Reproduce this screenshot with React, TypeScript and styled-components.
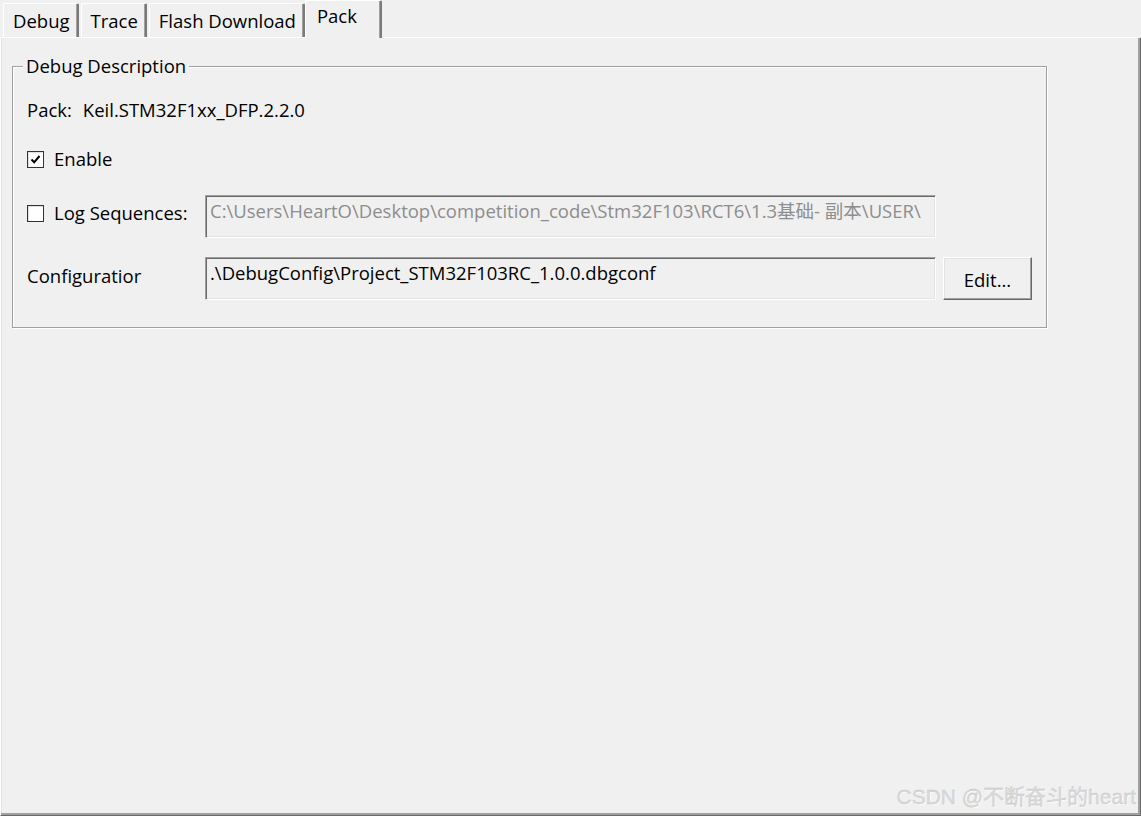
import React from "react";
import styled, { createGlobalStyle } from "styled-components";

const GlobalStyle = createGlobalStyle`
  html, body {
    margin: 0;
    padding: 0;
    background: #f0f0f0;
  }
  body {
    font-family: "Open Sans", "Noto Sans CJK SC", sans-serif;
    font-size: 18.5px;
    color: #000;
  }
`;

const Window = styled.div`
  width: 1141px;
  height: 816px;
  display: flex;
  flex-direction: column;
  background: #f0f0f0;
  position: relative;
  overflow: hidden;
`;

const TabBar = styled.div`
  height: 37px;
  display: flex;
  align-items: flex-end;
  padding-left: 3px;
  gap: 2px;
  position: relative;
  z-index: 1;
`;

interface TabProps {
  $active?: boolean;
}

const Tab = styled.div<TabProps>`
  box-sizing: border-box;
  height: ${({ $active }) => ($active ? "38px" : "34px")};
  margin-bottom: ${({ $active }) => ($active ? "-1px" : "0")};
  margin-left: ${({ $active }) => ($active ? "-2px" : "0")};
  padding: ${({ $active }) => ($active ? "4px 23px 0 11px" : "0 7px 0 9px")};
  display: flex;
  align-items: ${({ $active }) => ($active ? "flex-start" : "center")};
  line-height: 22px;
  background: #f0f0f0;
  border-top: 1px solid #fff;
  border-left: 1px solid #fff;
  border-right: 2px solid #7a7a7a;
  border-radius: 2px 2px 0 0;
  box-shadow: inset -1px 0 0 #a0a0a0;
  white-space: nowrap;
`;

const Panel = styled.div`
  flex: 1;
  box-sizing: border-box;
  border-top: 1px solid #fff;
  border-left: 1px solid #fff;
  border-right: 1px solid #696969;
  border-bottom: 1px solid #696969;
  box-shadow: inset -2px -2px 0 #a0a0a0, inset 1px 0 0 #e3e3e3;
  padding: 17px 0 0 11px;
`;

const Group = styled.fieldset`
  box-sizing: border-box;
  width: 1035px;
  margin: 0;
  padding: 0 13px 27px 14px;
  border: 1px solid #a0a0a0;
  box-shadow: 1px 1px 0 #fff, inset 1px 1px 0 #fff;
`;

const Legend = styled.legend`
  margin-left: -4px;
  padding: 0 3px;
  line-height: 22px;
  background: #f0f0f0;
`;

const PackLine = styled.div`
  margin-top: 22px;
  line-height: 22px;
  display: flex;
  gap: 11px;
`;

interface RowProps {
  $top: number;
}

const Row = styled.div<RowProps>`
  margin-top: ${({ $top }) => $top}px;
  display: flex;
  align-items: flex-start;
`;

const CheckLabel = styled.label<RowProps>`
  width: 178px;
  margin-top: ${({ $top }) => $top}px;
  display: flex;
  align-items: center;
  gap: 10px;
  line-height: 22px;
  white-space: nowrap;
`;

const Box = styled.span`
  box-sizing: border-box;
  width: 17px;
  height: 17px;
  background: #fff;
  border: 1px solid #333;
  box-shadow: inset 1px 1px 0 #e0e0e0;
  display: flex;
  align-items: center;
  justify-content: center;
`;

const Label = styled.span<RowProps>`
  width: 178px;
  margin-top: ${({ $top }) => $top}px;
  line-height: 22px;
`;

interface FieldProps {
  $disabled?: boolean;
}

const Field = styled.div<FieldProps>`
  box-sizing: border-box;
  width: 731px;
  height: 43px;
  padding: 4px 0 0 4px;
  line-height: 22px;
  white-space: nowrap;
  overflow: hidden;
  color: ${({ $disabled }) => ($disabled ? "#8d8d8d" : "#000")};
  background: #f0f0f0;
  border: 1px solid;
  border-color: #a0a0a0 #fff #fff #a0a0a0;
  box-shadow: inset 1px 1px 0 #696969, inset -1px -1px 0 #e3e3e3;
`;

const Button = styled.button`
  box-sizing: border-box;
  width: 89px;
  height: 43px;
  margin-left: 7px;
  padding: 2px 0 0;
  font: inherit;
  color: #000;
  background: #f0f0f0;
  border: 1px solid;
  border-color: #fff #696969 #696969 #fff;
  box-shadow: inset -1px -1px 0 #a0a0a0, inset 1px 1px 0 #e3e3e3;
  border-radius: 0;
`;

const Watermark = styled.div`
  position: absolute;
  right: 5px;
  bottom: 6px;
  font-family: "Liberation Sans", "Noto Sans CJK SC", sans-serif;
  font-size: 21px;
  color: #dadada;
  text-shadow: 1px 1px 0 #fcfcfc;
  -webkit-text-stroke: 0.3px #c4c4c4;
  white-space: nowrap;
`;

function Check() {
  return (
    <svg width="11" height="11" viewBox="0 0 11 11">
      <path d="M1.5 5.5 L4.2 8.3 L9.5 2" fill="none" stroke="#000" strokeWidth="2" />
    </svg>
  );
}

const tabs = ["Debug", "Trace", "Flash Download", "Pack"];

export default function App() {
  return (
    <Window>
      <GlobalStyle />
      <TabBar>
        {tabs.map((t) => (
          <Tab key={t} $active={t === "Pack"}>
            {t}
          </Tab>
        ))}
      </TabBar>
      <Panel>
        <Group>
          <Legend>Debug Description</Legend>
          <PackLine>
            <span>Pack:</span>
            <span>Keil.STM32F1xx_DFP.2.2.0</span>
          </PackLine>
          <Row $top={27}>
            <CheckLabel $top={0}>
              <Box>
                <Check />
              </Box>
              Enable
            </CheckLabel>
          </Row>
          <Row $top={25}>
            <CheckLabel $top={7}>
              <Box />
              Log Sequences:
            </CheckLabel>
            <Field $disabled>
              C:\Users\HeartO\Desktop\competition_code\Stm32F103\RCT6\1.3基础- 副本\USER\
            </Field>
          </Row>
          <Row $top={19}>
            <Label $top={8}>Configuratior</Label>
            <Field>.\DebugConfig\Project_STM32F103RC_1.0.0.dbgconf</Field>
            <Button>Edit...</Button>
          </Row>
        </Group>
      </Panel>
      <Watermark>CSDN @不断奋斗的heart</Watermark>
    </Window>
  );
}
